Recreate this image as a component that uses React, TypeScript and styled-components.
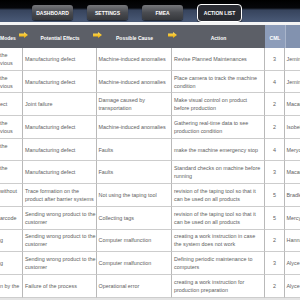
import React from 'react';
import styled, { createGlobalStyle, css } from 'styled-components';

const GlobalStyle = createGlobalStyle`
  html, body { margin: 0; padding: 0; background: #e4e4e4; }
  body { font-family: "Liberation Sans", Arial, sans-serif; }
`;

const Page = styled.div`
  width: 300px;
  height: 300px;
  overflow: hidden;
  background: #e4e4e4;
  display: flex;
  flex-direction: column;
`;

const TopBar = styled.div`
  flex: none;
  height: 22px;
  box-sizing: border-box;
  padding: 5px 0 0 32px;
  display: flex;
  align-items: flex-start;
  gap: 14px;
  background: linear-gradient(to bottom, #000 0px, #06070a 8px, #36435c 10px, #4a5a77 22px);
`;

const NavButton = styled.div<{ $active?: boolean }>`
  flex: none;
  width: 41px;
  height: 15px;
  box-sizing: border-box;
  border-radius: 3px;
  display: flex;
  align-items: center;
  justify-content: center;
  font: bold 5px "Liberation Sans", Arial, sans-serif;
  color: #fff;
  background: linear-gradient(#76777b, #4a4c51 50%, #36383c);
  box-shadow: 0 1px 1px rgba(0, 0, 0, 0.6);
  ${(p) =>
    p.$active &&
    css`
      width: 45px;
      height: 18px;
      margin-top: -1px;
      border: 1.5px solid #fff;
      border-radius: 4px;
      background: #2a2c33;
    `}
`;

const Separator = styled.div`
  flex: none;
  height: 3px;
  background: #f4f4f4;
`;

const Grid = styled.div`
  display: grid;
  grid-template-columns: 23px 74px 75px 93px 20px 40px;
  grid-template-rows: 23px;
  grid-auto-rows: 22.7px;
  width: max-content;
  background: #fff;
`;

const HeaderCell = styled.div<{ $tone?: 'dark' | 'cml' | 'blue'; $align?: 'left' | 'center' }>`
  position: relative;
  display: flex;
  align-items: center;
  justify-content: ${(p) => (p.$align === 'left' ? 'flex-start' : 'center')};
  padding-top: 3px;
  box-sizing: border-box;
  font: bold 5px "Liberation Sans", Arial, sans-serif;
  color: #fff;
  white-space: nowrap;
  background: ${(p) => (p.$tone === 'cml' ? '#8d9dba' : p.$tone === 'blue' ? '#8292af' : '#5c5f67')};
  border-left: ${(p) => (p.$tone === 'blue' ? '1px solid #a9b5cb' : 'none')};
`;

const Arrow = styled.svg`
  position: absolute;
  right: -5px;
  top: 7px;
  width: 9px;
  height: 6px;
  z-index: 2;
`;

const Cell = styled.div<{ $align?: 'left' | 'center'; $pad?: number }>`
  display: flex;
  flex-direction: column;
  justify-content: center;
  align-items: ${(p) => (p.$align === 'center' ? 'center' : 'flex-start')};
  padding: 0 0 0 ${(p) => p.$pad ?? 2}px;
  box-sizing: border-box;
  overflow: hidden;
  border-right: 1px solid #b9b9b9;
  border-bottom: 1px solid #cdcdcd;
  font-size: 5.4px;
  line-height: 8px;
  color: #5e5e5e;
  white-space: nowrap;
`;

const Line = styled.span`
  display: block;
  min-height: 8px;
`;

const ArrowIcon = () => (
  <Arrow viewBox="0 0 9 6">
    <defs>
      <linearGradient id="ag" x1="0" y1="0" x2="0" y2="1">
        <stop offset="0" stopColor="#ffe066" />
        <stop offset="1" stopColor="#e9a900" />
      </linearGradient>
    </defs>
    <polygon points="0,1.6 5,1.6 5,0 9,3 5,6 5,4.4 0,4.4" fill="url(#ag)" />
  </Arrow>
);

type Row = [string[], string[], string[], string[], string, string];

const rows: Row[] = [
  [['the', 'vious'], ['Manufacturing defect'], ['Machine-induced anomalies'], ['Revise Planned Maintenances'], '3', 'Jemima'],
  [['the', 'vious'], ['Manufacturing defect'], ['Machine-induced anomalies'], ['Place camera to track the machine', 'condition'], '4', 'Jemima'],
  [['ect'], ['Joint failure'], ['Damage caused by', 'transportation'], ['Make visual control on product', 'before production'], '2', 'Macauley'],
  [['the', 'vious'], ['Manufacturing defect'], ['Machine-induced anomalies'], ['Gathering real-time data to see', 'production condition'], '2', 'Isobel'],
  [['the', ''], ['Manufacturing defect'], ['Faults'], ['make the machine emergency stop'], '4', 'Meryck'],
  [['the', ''], ['Manufacturing defect'], ['Faults'], ['Standard checks on machine before', 'running'], '3', 'Macauley'],
  [['without', ''], ['Trace formation on the', 'product after barrier systems'], ['Not using the taping tool'], ['revision of the taping tool so that it', 'can be used on all products'], '5', 'Bradley'],
  [['arcode'], ['Sending wrong product to the', 'customer'], ['Collecting tags'], ['revision of the taping tool so that it', 'can be used on all products'], '5', 'Mercy'],
  [['g'], ['Sending wrong product to the', 'customer'], ['Computer malfunction'], ['creating a work instruction in case', 'the system does not work'], '2', 'Hannah'],
  [['g'], ['Sending wrong product to the', 'customer'], ['Computer malfunction'], ['Defining periodic maintenance to', 'computers'], '3', 'Alyce'],
  [['n by the'], ['Failure of the process'], ['Operational error'], ['creating a work instruction for', 'production preparation'], '2', 'Alyce'],
];

const Lines = ({ lines }: { lines: string[] }) => (
  <>
    {lines.map((l, i) => (
      <Line key={i}>{l || '\u00a0'}</Line>
    ))}
  </>
);

export default function App() {
  return (
    <>
      <GlobalStyle />
      <Page>
        <TopBar>
          <NavButton>DASHBOARD</NavButton>
          <NavButton>SETTINGS</NavButton>
          <NavButton>FMEA</NavButton>
          <NavButton $active>ACTION LIST</NavButton>
        </TopBar>
        <Separator />
        <Grid>
          <HeaderCell $align="left">
            Modes
            <ArrowIcon />
          </HeaderCell>
          <HeaderCell>
            Potential Effects
            <ArrowIcon />
          </HeaderCell>
          <HeaderCell>
            Possible Cause
            <ArrowIcon />
          </HeaderCell>
          <HeaderCell>Action</HeaderCell>
          <HeaderCell $tone="cml">CML</HeaderCell>
          <HeaderCell $tone="blue" />
          {rows.map((r, i) => (
            <React.Fragment key={i}>
              <Cell $pad={0}>
                <Lines lines={r[0]} />
              </Cell>
              <Cell>
                <Lines lines={r[1]} />
              </Cell>
              <Cell $pad={1.5}>
                <Lines lines={r[2]} />
              </Cell>
              <Cell>
                <Lines lines={r[3]} />
              </Cell>
              <Cell $align="center" $pad={0}>
                {r[4]}
              </Cell>
              <Cell $pad={1.5}>{r[5]}</Cell>
            </React.Fragment>
          ))}
        </Grid>
      </Page>
    </>
  );
}
